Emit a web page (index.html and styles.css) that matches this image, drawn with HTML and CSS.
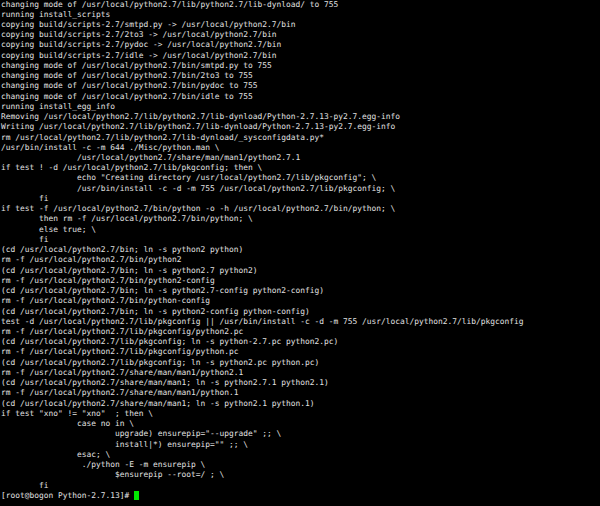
FILE: index.html
```html
<!DOCTYPE html>
<html>
<head>
<meta charset="utf-8">
<link rel="stylesheet" href="styles.css">
</head>
<body>
<pre class="term">changing mode of /usr/local/python2.7/lib/python2.7/lib-dynload/ to 755
running install_scripts
copying build/scripts-2.7/smtpd.py -&gt; /usr/local/python2.7/bin
copying build/scripts-2.7/2to3 -&gt; /usr/local/python2.7/bin
copying build/scripts-2.7/pydoc -&gt; /usr/local/python2.7/bin
copying build/scripts-2.7/idle -&gt; /usr/local/python2.7/bin
changing mode of /usr/local/python2.7/bin/smtpd.py to 755
changing mode of /usr/local/python2.7/bin/2to3 to 755
changing mode of /usr/local/python2.7/bin/pydoc to 755
changing mode of /usr/local/python2.7/bin/idle to 755
running install_egg_info
Removing /usr/local/python2.7/lib/python2.7/lib-dynload/Python-2.7.13-py2.7.egg-info
Writing /usr/local/python2.7/lib/python2.7/lib-dynload/Python-2.7.13-py2.7.egg-info
rm /usr/local/python2.7/lib/python2.7/lib-dynload/_sysconfigdata.py*
/usr/bin/install -c -m 644 ./Misc/python.man \
                /usr/local/python2.7/share/man/man1/python2.7.1
if test ! -d /usr/local/python2.7/lib/pkgconfig; then \
                echo "Creating directory /usr/local/python2.7/lib/pkgconfig"; \
                /usr/bin/install -c -d -m 755 /usr/local/python2.7/lib/pkgconfig; \
        fi
if test -f /usr/local/python2.7/bin/python -o -h /usr/local/python2.7/bin/python; \
        then rm -f /usr/local/python2.7/bin/python; \
        else true; \
        fi
(cd /usr/local/python2.7/bin; ln -s python2 python)
rm -f /usr/local/python2.7/bin/python2
(cd /usr/local/python2.7/bin; ln -s python2.7 python2)
rm -f /usr/local/python2.7/bin/python2-config
(cd /usr/local/python2.7/bin; ln -s python2.7-config python2-config)
rm -f /usr/local/python2.7/bin/python-config
(cd /usr/local/python2.7/bin; ln -s python2-config python-config)
test -d /usr/local/python2.7/lib/pkgconfig || /usr/bin/install -c -d -m 755 /usr/local/python2.7/lib/pkgconfig
rm -f /usr/local/python2.7/lib/pkgconfig/python2.pc
(cd /usr/local/python2.7/lib/pkgconfig; ln -s python-2.7.pc python2.pc)
rm -f /usr/local/python2.7/lib/pkgconfig/python.pc
(cd /usr/local/python2.7/lib/pkgconfig; ln -s python2.pc python.pc)
rm -f /usr/local/python2.7/share/man/man1/python2.1
(cd /usr/local/python2.7/share/man/man1; ln -s python2.7.1 python2.1)
rm -f /usr/local/python2.7/share/man/man1/python.1
(cd /usr/local/python2.7/share/man/man1; ln -s python2.1 python.1)
if test "xno" != "xno"  ; then \
                case no in \
                        upgrade) ensurepip="--upgrade" ;; \
                        install|*) ensurepip="" ;; \
                esac; \
                 ./python -E -m ensurepip \
                        $ensurepip --root=/ ; \
        fi
[root@bogon Python-2.7.13]# <span class="cursor"></span></pre>
</body>
</html>
```
FILE: styles.css
```css
html, body {
  margin: 0;
  padding: 0;
  background: #000;
  height: 100%;
  overflow: hidden;
}
.term {
  margin: -0.5px 0 0 1px;
  padding: 0;
  font-family: "DejaVu Sans Mono", "Liberation Mono", monospace;
  font-size: 7.9px;
  line-height: 10.24px;
  color: #e2e2e2;
  white-space: pre;
}
.cursor {
  display: inline-block;
  width: 5px;
  height: 9.5px;
  background: #00e600;
  vertical-align: -2.5px;
}
```
